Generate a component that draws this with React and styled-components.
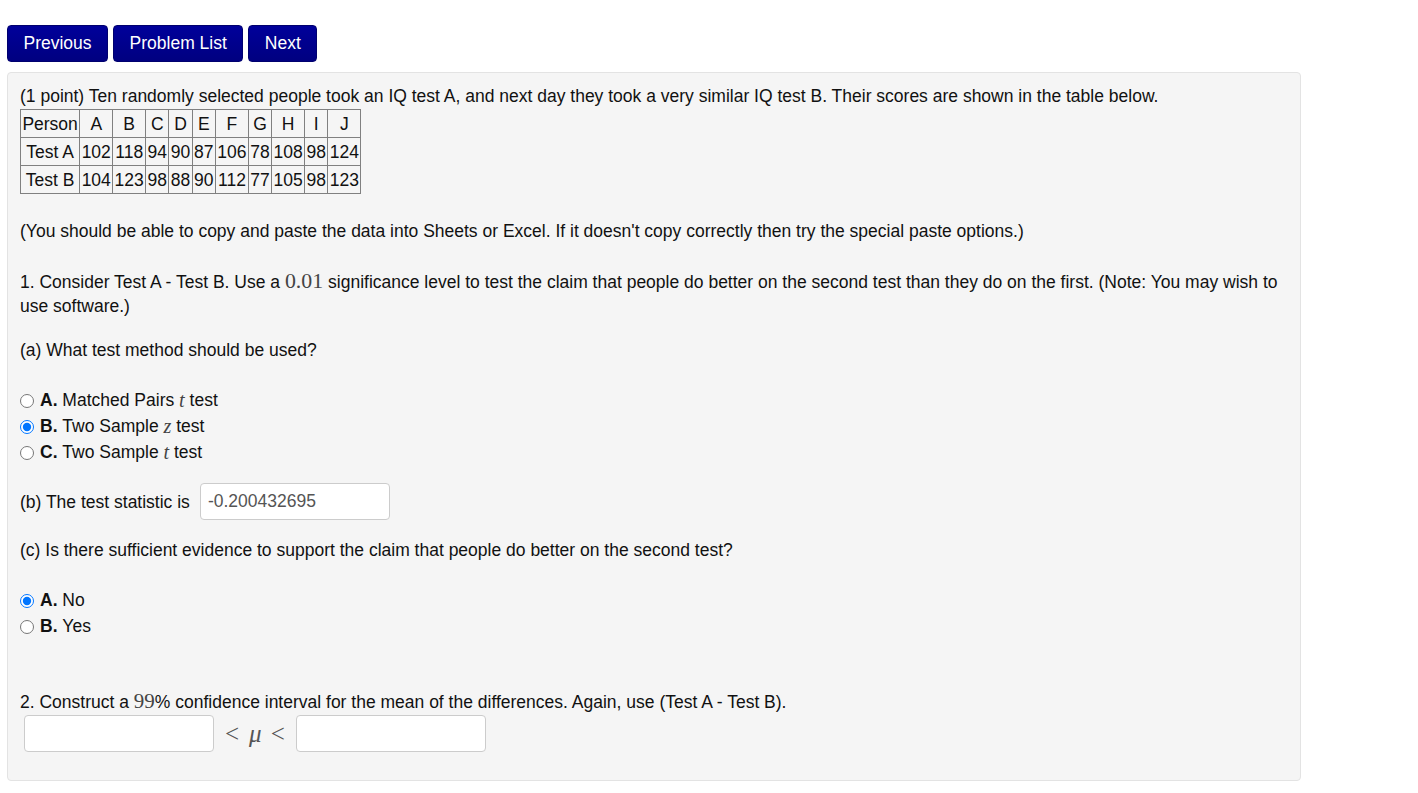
import React from "react";
import styled, { createGlobalStyle } from "styled-components";

const GlobalStyle = createGlobalStyle`
  body {
    margin: 0;
    background: #fff;
    font-family: "Liberation Sans", Arial, sans-serif;
    font-size: 17.5px;
    color: #111;
  }
`;

const Page = styled.div`
  padding: 25px 0 20px 7px;
  width: 1294px;
`;

const Nav = styled.div`
  display: flex;
  gap: 5px;
  margin-bottom: 10px;
`;

const NavButton = styled.button`
  height: 37px;
  padding: 0 15.5px;
  border: 1px solid #00006e;
  border-radius: 4px;
  background: linear-gradient(#00009a, #000080);
  color: #fff;
  font-family: inherit;
  font-size: 17.5px;
  cursor: pointer;
`;

const Panel = styled.div`
  background: #f5f5f5;
  border: 1px solid #e3e3e3;
  border-radius: 4px;
  padding: 11px 12px 28px 12px;
  line-height: 24px;
`;

const Para = styled.div`
  margin-top: ${(p) => p.$top || 0}px;
`;

const DataTable = styled.table`
  border-collapse: collapse;
  border: 1px solid #333;
  margin-top: 1px;
  text-align: center;
`;

const Cell = styled.td`
  border: 1px solid #808080;
  padding: 2px 1.4px 1px;
  line-height: 24px;
`;

const Math = styled.span`
  font-family: "Liberation Serif", "DejaVu Serif", serif;
  font-style: ${(p) => (p.$italic ? "italic" : "normal")};
  font-size: ${(p) => p.$size || 1.25}em;
  line-height: 0;
  color: #444;
`;

const Options = styled.div`
  margin-top: ${(p) => p.$top}px;
`;

const Option = styled.label`
  display: flex;
  align-items: center;
  height: 26px;
`;

const Radio = styled.input`
  width: 14px;
  height: 14px;
  margin: 1px 6px 0 0;
`;

const Letter = styled.b``;

const Row = styled.div`
  display: flex;
  align-items: center;
  margin-top: ${(p) => p.$top}px;
  margin-left: ${(p) => p.$left || 0}px;
`;

const Answer = styled.input`
  box-sizing: border-box;
  width: 190px;
  height: 37px;
  margin-left: ${(p) => p.$left || 0}px;
  padding: 0 7px;
  border: 1px solid #ccc;
  border-radius: 4px;
  background: #fff;
  font-family: "Liberation Sans", Arial, sans-serif;
  font-size: 17.5px;
  color: #555;
`;

const Between = styled.span`
  display: flex;
  align-items: center;
  font-family: "Liberation Serif", "DejaVu Serif", serif;
  font-size: 25px;
  color: #555;
  margin: 0 11px 0 11px;
`;

const Mu = styled.i`
  margin: 0 9px 0 10px;
`;

const persons = ["A", "B", "C", "D", "E", "F", "G", "H", "I", "J"];
const testA = [102, 118, 94, 90, 87, 106, 78, 108, 98, 124];
const testB = [104, 123, 98, 88, 90, 112, 77, 105, 98, 123];

export default function App() {
  return (
    <>
      <GlobalStyle />
      <Page>
        <Nav>
          <NavButton>Previous</NavButton>
          <NavButton>Problem List</NavButton>
          <NavButton>Next</NavButton>
        </Nav>
        <Panel>
          <Para>
            (1 point) Ten randomly selected people took an IQ test A, and next day they took a very
            similar IQ test B. Their scores are shown in the table below.
          </Para>
          <DataTable>
            <tbody>
              <tr>
                <Cell>Person</Cell>
                {persons.map((p) => (
                  <Cell key={p}>{p}</Cell>
                ))}
              </tr>
              <tr>
                <Cell>Test A</Cell>
                {testA.map((v, i) => (
                  <Cell key={i}>{v}</Cell>
                ))}
              </tr>
              <tr>
                <Cell>Test B</Cell>
                {testB.map((v, i) => (
                  <Cell key={i}>{v}</Cell>
                ))}
              </tr>
            </tbody>
          </DataTable>
          <Para $top={25}>
            (You should be able to copy and paste the data into Sheets or Excel. If it doesn't copy
            correctly then try the special paste options.)
          </Para>
          <Para $top={27}>
            1. Consider Test A - Test B. Use a <Math>0.01</Math> significance level to test the claim
            that people do better on the second test than they do on the first. (Note: You may wish
            to use software.)
          </Para>
          <Para $top={20}>(a) What test method should be used?</Para>
          <Options $top={25}>
            <Option>
              <Radio type="radio" name="method" />
              <Letter>A.</Letter>&nbsp;Matched Pairs&nbsp;<Math $italic $size={1.15}>t</Math>&nbsp;test
            </Option>
            <Option>
              <Radio type="radio" name="method" defaultChecked />
              <Letter>B.</Letter>&nbsp;Two Sample&nbsp;<Math $italic $size={1.15}>z</Math>&nbsp;test
            </Option>
            <Option>
              <Radio type="radio" name="method" />
              <Letter>C.</Letter>&nbsp;Two Sample&nbsp;<Math $italic $size={1.15}>t</Math>&nbsp;test
            </Option>
          </Options>
          <Row $top={18}>
            (b) The test statistic is
            <Answer $left={10} defaultValue="-0.200432695" />
          </Row>
          <Para $top={18}>
            (c) Is there sufficient evidence to support the claim that people do better on the
            second test?
          </Para>
          <Options $top={25}>
            <Option>
              <Radio type="radio" name="claim" defaultChecked />
              <Letter>A.</Letter>&nbsp;No
            </Option>
            <Option>
              <Radio type="radio" name="claim" />
              <Letter>B.</Letter>&nbsp;Yes
            </Option>
          </Options>
          <Para $top={51}>
            2. Construct a <Math $size={1.2}>99</Math>% confidence interval for the mean of the
            differences. Again, use (Test A - Test B).
          </Para>
          <Row $top={1} $left={4}>
            <Answer />
            <Between>
              <span>&lt;</span>
              <Mu>μ</Mu>
              <span>&lt;</span>
            </Between>
            <Answer />
          </Row>
        </Panel>
      </Page>
    </>
  );
}
